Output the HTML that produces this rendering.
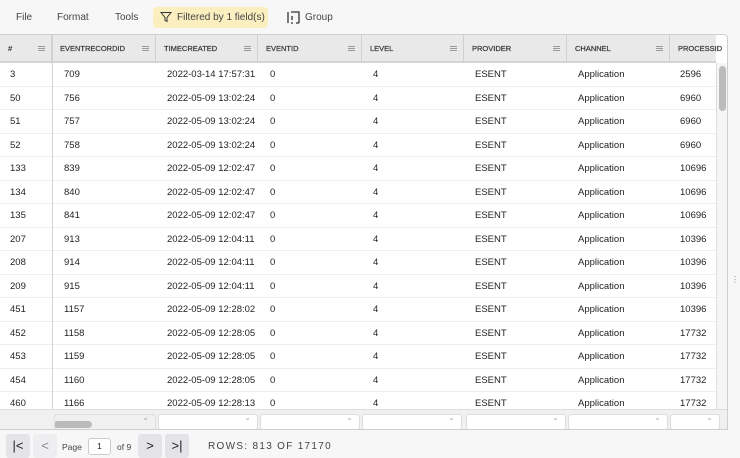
<!DOCTYPE html>
<html><head><style>
*{box-sizing:border-box;margin:0;padding:0}
body{width:740px;height:458px;background:#f7f7f7;font-family:"Liberation Sans",sans-serif;color:#222;position:relative;overflow:hidden}
.tb{position:absolute;top:0;left:0;height:34px;font-size:10px;color:#444}
.tb span{position:absolute;top:12px}
.filt{position:absolute;left:153px;top:7px;width:115px;height:21px;background:#fbefc0;border-radius:4px}
.grid{position:absolute;left:0;top:34px;width:728px;height:396px;background:#fff;border:1px solid #cfcfcf;border-left:none;border-radius:0 4px 0 0;overflow:hidden}
.hd{position:absolute;top:0;left:0;height:28px;width:716px;background:#e9e9e9;border-bottom:2px solid #d4d4d4}
.hc{position:absolute;top:0;height:28px;border-right:1px solid #d0d0d0;font-size:7.5px;color:#333;padding:9px 0 0 8px;-webkit-text-stroke:0.2px #333}
.hc i{position:absolute;right:6px;top:11px;width:7px;height:5px;border-top:1px solid #999;border-bottom:1px solid #999}
.hc i:after{content:"";position:absolute;left:0;right:0;top:1px;border-top:1px solid #999}
.row{position:absolute;left:0;width:716px;height:23.5px;border-bottom:1px solid #eceef3;font-size:9.5px}
.row span{position:absolute;top:6px}
.pin{position:absolute;left:52px;top:0;width:1px;height:374px;background:#d4d4d4}
.vs{position:absolute;left:716px;top:28px;width:12px;height:346px;background:#f5f5f5;border-left:1px solid #ddd}
.vs div{position:absolute;left:2px;top:3px;width:7px;height:45px;background:#bbb;border-radius:4px}
.ft{position:absolute;left:0;top:374px;width:728px;height:22px;background:#f0f0f0;border-top:1px solid #ddd}
.fi{position:absolute;top:4px;height:16px;background:#fff;border:1px solid #ddd;border-radius:3px}
.fi:after{content:"⌄";position:absolute;right:6px;top:-2px;font-size:8px;color:#aaa}
.pg{position:absolute;top:434px;height:24px;width:24px;background:#e3e3e8;border-radius:3px;font-size:13px;text-align:center;line-height:24px;color:#222}
</style></head><body>
<div class="tb">
<span style="left:16px">File</span><span style="left:57px">Format</span><span style="left:115px">Tools</span>
</div>
<div class="filt"></div>
<svg style="position:absolute;left:160px;top:11px" width="12" height="12" viewBox="0 0 12 12"><path d="M1 1.5h10L7 6.5v4L5 9.5v-3z" fill="none" stroke="#333" stroke-width="1"/></svg>
<span style="position:absolute;left:177px;top:12px;font-size:10px;color:#444">Filtered by 1 field(s)</span>
<svg style="position:absolute;left:287px;top:11px" width="13" height="13" viewBox="0 0 13 13"><path d="M1 1v11M4 1h8v11M4 12h2M9 12h3M5 5v4" fill="none" stroke="#333" stroke-width="1.3"/></svg>
<span style="position:absolute;left:305px;top:12px;font-size:10px;color:#444">Group</span>
<div class="grid">
<div class="hd">
<div class="hc" style="left:0;width:52px">#<i></i></div>
<div class="hc" style="left:52px;width:104px">EVENTRECORDID<i></i></div>
<div class="hc" style="left:156px;width:102px">TIMECREATED<i></i></div>
<div class="hc" style="left:258px;width:104px">EVENTID<i></i></div>
<div class="hc" style="left:362px;width:102px">LEVEL<i></i></div>
<div class="hc" style="left:464px;width:103px">PROVIDER<i></i></div>
<div class="hc" style="left:567px;width:103px">CHANNEL<i></i></div>
<div class="hc" style="left:670px;width:60px">PROCESSID</div>
</div>
<div id="rows"></div>
<div class="pin"></div>
<div class="vs"><div></div></div>
<div class="ft">
<div style="position:absolute;left:54px;top:11px;width:38px;height:7px;background:#bbb;border-radius:4px"></div>
<div class="fi" style="left:54px;width:102px;background:transparent"></div>
<div class="fi" style="left:158px;width:100px"></div>
<div class="fi" style="left:260px;width:100px"></div>
<div class="fi" style="left:362px;width:100px"></div>
<div class="fi" style="left:466px;width:100px"></div>
<div class="fi" style="left:568px;width:100px"></div>
<div class="fi" style="left:670px;width:50px"></div>
</div>
</div>
<div style="position:absolute;left:731px;top:278px;font-size:8px;color:#888;line-height:3px">⋮⋮</div>
<div class="pg" style="left:6px">|&lt;</div>
<div class="pg" style="left:33px;background:#eeeef0;color:#888">&lt;</div>
<span style="position:absolute;left:62px;top:442px;font-size:8.5px;color:#444">Page</span>
<div style="position:absolute;left:88px;top:438px;width:23px;height:17px;background:#fff;border:1px solid #ccc;border-radius:3px;font-size:8.5px;text-align:center;line-height:15px">1</div>
<span style="position:absolute;left:117px;top:442px;font-size:8.5px;color:#444">of 9</span>
<div class="pg" style="left:138px">&gt;</div>
<div class="pg" style="left:165px">&gt;|</div>
<span style="position:absolute;left:208px;top:441px;font-size:10px;letter-spacing:1.3px;color:#444">ROWS: 813 OF 17170</span>
<script>
var d=[["3","709","2022-03-14 17:57:31","2596"],["50","756","2022-05-09 13:02:24","6960"],["51","757","2022-05-09 13:02:24","6960"],["52","758","2022-05-09 13:02:24","6960"],["133","839","2022-05-09 12:02:47","10696"],["134","840","2022-05-09 12:02:47","10696"],["135","841","2022-05-09 12:02:47","10696"],["207","913","2022-05-09 12:04:11","10396"],["208","914","2022-05-09 12:04:11","10396"],["209","915","2022-05-09 12:04:11","10396"],["451","1157","2022-05-09 12:28:02","10396"],["452","1158","2022-05-09 12:28:05","17732"],["453","1159","2022-05-09 12:28:05","17732"],["454","1160","2022-05-09 12:28:05","17732"],["460","1166","2022-05-09 12:28:13","17732"]];
var h="";d.forEach(function(r,i){h+='<div class="row" style="top:'+(28+i*23.5)+'px"><span style="left:10px">'+r[0]+'</span><span style="left:64px">'+r[1]+'</span><span style="left:167px">'+r[2]+'</span><span style="left:270px">0</span><span style="left:373px">4</span><span style="left:475px">ESENT</span><span style="left:578px">Application</span><span style="left:680px">'+r[3]+'</span></div>'});
document.getElementById("rows").innerHTML=h;
</script>
</body></html>
